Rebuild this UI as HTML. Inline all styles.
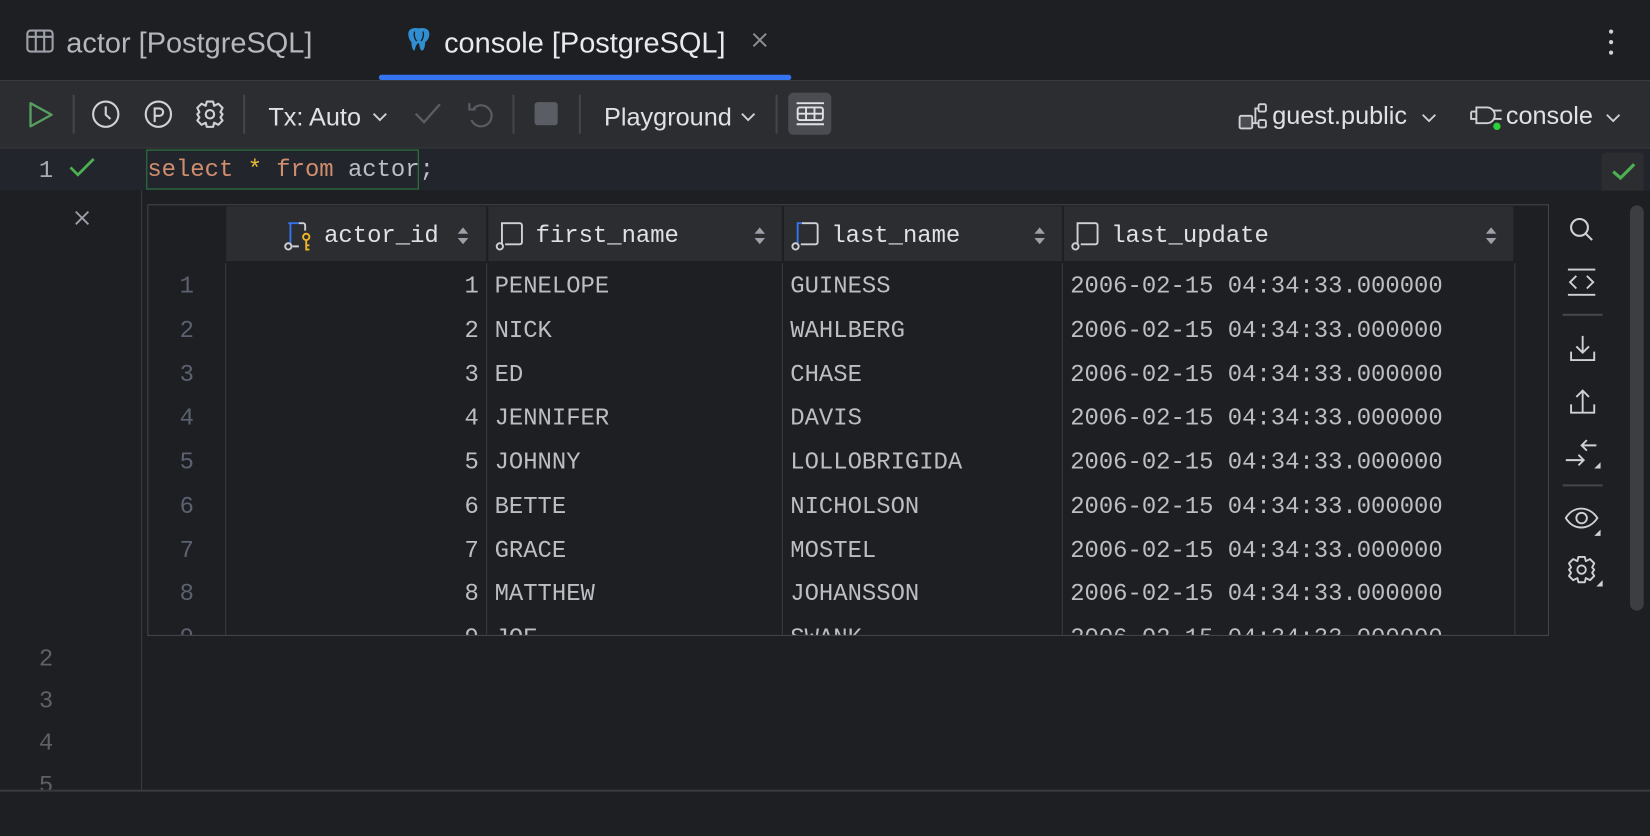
<!DOCTYPE html>
<html><head><meta charset="utf-8"><style>
*{margin:0;padding:0;box-sizing:border-box}
html,body{width:1650px;height:836px;overflow:hidden;background:#1e1f22}
#w{position:absolute;left:0;top:0;width:1568px;height:794px;transform-origin:0 0;transform:scale(1.05230,1.05290);background:#1e1f22;font-family:"Liberation Sans",sans-serif;color:#dfe1e5}
.a{position:absolute}
.ui{font-size:25px;white-space:nowrap}
.mono{font-family:"Liberation Mono",monospace;font-size:22.7px;white-space:pre}
.sep{position:absolute;width:2px;top:90px;height:37px;background:#43454a}
svg{position:absolute;overflow:visible}
</style></head><body><div id="w">
<!-- tab bar -->
<div class="a" style="left:0;top:76px;width:1568px;height:1px;background:#393b40"></div>
<svg style="left:25px;top:28px" width="26" height="22" viewBox="0 0 26 22" fill="none" stroke="#9da0a8" stroke-width="2"><rect x="1" y="1" width="24" height="20" rx="3"/><line x1="1" y1="7" x2="25" y2="7"/><line x1="9" y1="1" x2="9" y2="21"/><line x1="17" y1="1" x2="17" y2="21"/></svg>
<div class="a ui" style="left:63px;top:25px;color:#b4b7be;font-size:27.5px">actor [PostgreSQL]</div>
<svg style="left:385px;top:26px" width="26" height="24" viewBox="0 0 26 24"><path d="M3 6C3 1 9 0 13 1 17 0 23 1 23 6 23 10 21 13 19 14 19 18 18 22 16 22 14 22 14 18 13 15 11 15 10 18 9 22 7 22 6 18 6 14 4 12 3 9 3 6Z" fill="#2f8fd2"/><path d="M9 4C8 7 9 11 11 13M17 4C18 7 17 11 15 13" stroke="#1e1f22" stroke-width="1.3" fill="none"/></svg>
<div class="a ui" style="left:422px;top:25px;color:#e8eaee;font-size:27.5px">console [PostgreSQL]</div>
<svg style="left:715px;top:31px" width="14" height="14" viewBox="0 0 14 14" stroke="#8c8f96" stroke-width="1.8"><path d="M1 1L13 13M13 1L1 13"/></svg>
<div class="a" style="left:360px;top:71px;width:392px;height:5px;border-radius:3px;background:#3574f0"></div>
<div class="a" style="left:1529px;top:28px;width:4px;height:4px;border-radius:2px;background:#cfd1d6;box-shadow:0 10px 0 #cfd1d6,0 20px 0 #cfd1d6"></div>
<!-- toolbar -->
<div class="a" style="left:0;top:77px;width:1568px;height:63px;background:#2b2d30"></div>
<div class="a" style="left:0;top:140px;width:1568px;height:1px;background:#393b40"></div>
<svg style="left:27px;top:96px" width="24" height="26" viewBox="0 0 24 26"><path d="M2 2L22 13 2 24Z" fill="none" stroke="#57a05f" stroke-width="2.2" stroke-linejoin="round"/></svg>
<div class="sep" style="left:69px"></div>
<svg style="left:87px;top:95px" width="27" height="27" viewBox="0 0 27 27" fill="none" stroke="#cfd1d6" stroke-width="2"><circle cx="13.5" cy="13.5" r="12"/><path d="M13.5 6V14L18 18"/></svg>
<svg style="left:137px;top:95px" width="27" height="27" viewBox="0 0 27 27" fill="none" stroke="#cfd1d6" stroke-width="2"><circle cx="13.5" cy="13.5" r="12"/><path d="M10 21V8H14.5A3.5 3.5 0 0 1 14.5 15H10"/></svg>
<svg style="left:186px;top:95px" width="27" height="27" viewBox="-13.5 -13.5 27 27" fill="none" stroke="#cfd1d6" stroke-width="2"><path d="M-3-12H3L4-8 8-10 12-6 10-2 12 0 10 3 12 6 8 10 4 8 3 12H-3L-4 8-8 10-12 6-10 3-12 0-10-2-12-6-8-10-4-8Z" stroke-linejoin="round"/><circle r="4"/></svg>
<div class="sep" style="left:231px"></div>
<div class="a ui" style="left:255px;top:98px;font-size:24px">Tx: Auto</div>
<svg style="left:354px;top:107px" width="14" height="8" viewBox="0 0 14 8" fill="none" stroke="#cfd1d6" stroke-width="1.8"><path d="M1 1L7 7 13 1"/></svg>
<svg style="left:394px;top:98px" width="25" height="20" viewBox="0 0 25 20" fill="none" stroke="#5a5d63" stroke-width="2.2"><path d="M1 10L9 18 24 1"/></svg>
<svg style="left:444px;top:96px" width="25" height="26" viewBox="0 0 25 26" fill="none" stroke="#5a5d63" stroke-width="2"><path d="M6 7A10 10 0 1 1 4 18M2 2V8H8"/></svg>
<div class="sep" style="left:487px"></div>
<div class="a" style="left:508px;top:97px;width:22px;height:22px;border-radius:3px;background:#5a5d63"></div>
<div class="sep" style="left:550px"></div>
<div class="a ui" style="left:574px;top:98px;font-size:24px">Playground</div>
<svg style="left:704px;top:107px" width="14" height="8" viewBox="0 0 14 8" fill="none" stroke="#cfd1d6" stroke-width="1.8"><path d="M1 1L7 7 13 1"/></svg>
<div class="sep" style="left:737px"></div>
<div class="a" style="left:749px;top:88px;width:41px;height:40px;border-radius:5px;background:#4a4c51"></div>
<svg style="left:756px;top:97px" width="28" height="22" viewBox="0 0 28 22" fill="none" stroke="#dfe1e5" stroke-width="1.8"><line x1="1" y1="1" x2="27" y2="1"/><line x1="1" y1="21" x2="27" y2="21"/><rect x="2" y="5" width="24" height="12" rx="2"/><line x1="2" y1="11" x2="26" y2="11"/><line x1="10" y1="5" x2="10" y2="17"/><line x1="18" y1="5" x2="18" y2="17"/></svg>
<svg style="left:1177px;top:98px" width="28" height="26" viewBox="0 0 28 26" fill="none" stroke="#cfd1d6" stroke-width="1.8"><rect x="1" y="12" width="12" height="12" rx="1.5" fill="#4a4c51"/><rect x="19" y="1" width="7" height="7" rx="1.5"/><rect x="19" y="16" width="7" height="7" rx="1.5"/><path d="M13 19H19M16 19V5H19"/></svg>
<div class="a ui" style="left:1209px;top:97px;font-size:24px">guest.public</div>
<svg style="left:1351px;top:108px" width="14" height="8" viewBox="0 0 14 8" fill="none" stroke="#cfd1d6" stroke-width="1.8"><path d="M1 1L7 7 13 1"/></svg>
<svg style="left:1397px;top:99px" width="32" height="26" viewBox="0 0 32 26" fill="none" stroke="#cfd1d6" stroke-width="1.8"><path d="M1 7H6M1 7V14H6"/><path d="M6 3H16A7 7 0 0 1 16 18H6Z"/><path d="M22 6H30M22 14H30"/><circle cx="25.5" cy="21" r="3.5" fill="#2bd13a" stroke="none"/></svg>
<div class="a ui" style="left:1431px;top:97px;font-size:24px">console</div>
<svg style="left:1526px;top:108px" width="14" height="8" viewBox="0 0 14 8" fill="none" stroke="#cfd1d6" stroke-width="1.8"><path d="M1 1L7 7 13 1"/></svg>
<!-- editor -->
<div class="a" style="left:0;top:141px;width:1568px;height:40px;background:#23252d"></div>
<div class="a" style="left:1522px;top:145px;width:40px;height:36px;background:#2b2d30;border-radius:4px 4px 0 0"></div>
<svg style="left:1532px;top:155px" width="22" height="16" viewBox="0 0 22 16" fill="none" stroke="#4caf50" stroke-width="3"><path d="M1 8L8 14 21 1"/></svg>
<div class="a" style="left:134px;top:181px;width:1px;height:569px;background:#393b40"></div>
<div class="a mono" style="left:37px;top:149px;color:#a8abb2">1</div>
<svg style="left:66px;top:150px" width="24" height="18" viewBox="0 0 24 18" fill="none" stroke="#4caf50" stroke-width="2.6"><path d="M1 9L8 16 23 1"/></svg>
<div class="a" style="left:139px;top:142px;width:259px;height:38px;border:1.5px solid #2e7d40"></div>
<div class="a mono" style="left:140px;top:148px;color:#bcbec4"><span style="color:#cf8e6d">select</span> <span style="color:#e8ba36">*</span> <span style="color:#cf8e6d">from</span> actor;</div>
<svg style="left:71px;top:200px" width="14" height="14" viewBox="0 0 14 14" stroke="#9da0a8" stroke-width="1.8"><path d="M1 1L13 13M13 1L1 13"/></svg>
<!-- grid -->
<div class="a" style="left:140px;top:194px;width:1332px;height:410px;border:1.5px solid #43454a;overflow:hidden">
 <div class="a" style="left:74px;top:1px;width:1223px;height:52px;background:#2b2d30"></div>
 <div class="a" style="left:321px;top:1px;width:2px;height:410px;background:#1e1f22"></div>
 <div class="a" style="left:321px;top:55px;width:1px;height:360px;background:#393b40"></div>
 <div class="a" style="left:602px;top:1px;width:2px;height:410px;background:#1e1f22"></div>
 <div class="a" style="left:602px;top:55px;width:1px;height:360px;background:#393b40"></div>
 <div class="a" style="left:868px;top:1px;width:2px;height:410px;background:#1e1f22"></div>
 <div class="a" style="left:868px;top:55px;width:1px;height:360px;background:#393b40"></div>
 <div class="a" style="left:73px;top:55px;width:1px;height:360px;background:#393b40"></div>
 <div class="a" style="left:1298px;top:55px;width:1px;height:360px;background:#393b40"></div>
 <svg style="left:129px;top:15px" width="32" height="28" viewBox="0 0 32 28" fill="none" stroke-width="1.8"><path d="M6 22V2H4M6 2H14" stroke="#3574f0"/><path d="M14 2H18A2 2 0 0 1 20 4V9" stroke="#cfd1d6"/><circle cx="4" cy="24" r="3" stroke="#cfd1d6"/><path d="M8 24H14" stroke="#cfd1d6"/><circle cx="21" cy="15" r="3" stroke="#f0b429"/><path d="M21 18V27H24M21 23H24" stroke="#f0b429"/></svg>
 <div class="a mono" style="left:167px;top:16px;color:#dfe1e5">actor_id</div>
 <svg style="left:293px;top:20px" width="12" height="18" viewBox="0 0 12 18" fill="#9da0a8"><path d="M6 1L11 7H1Z"/><path d="M6 17L11 11H1Z"/></svg>
 <svg style="left:330px;top:15px" width="32" height="28" viewBox="0 0 32 28" fill="none" stroke="#cfd1d6" stroke-width="1.8"><path d="M6 22V2H23A2 2 0 0 1 25 4V20A2 2 0 0 1 23 22H9"/><circle cx="4" cy="24" r="3"/></svg>
 <div class="a mono" style="left:368px;top:16px;color:#dfe1e5">first_name</div>
 <svg style="left:575px;top:20px" width="12" height="18" viewBox="0 0 12 18" fill="#9da0a8"><path d="M6 1L11 7H1Z"/><path d="M6 17L11 11H1Z"/></svg>
 <svg style="left:611px;top:15px" width="32" height="28" viewBox="0 0 32 28" fill="none" stroke-width="1.8"><path d="M6 22V2H10" stroke="#3574f0"/><path d="M10 2H23A2 2 0 0 1 25 4V20A2 2 0 0 1 23 22H9" stroke="#cfd1d6"/><circle cx="4" cy="24" r="3" stroke="#cfd1d6"/></svg>
 <div class="a mono" style="left:649px;top:16px;color:#dfe1e5">last_name</div>
 <svg style="left:841px;top:20px" width="12" height="18" viewBox="0 0 12 18" fill="#9da0a8"><path d="M6 1L11 7H1Z"/><path d="M6 17L11 11H1Z"/></svg>
 <svg style="left:877px;top:15px" width="32" height="28" viewBox="0 0 32 28" fill="none" stroke="#cfd1d6" stroke-width="1.8"><path d="M6 22V2H23A2 2 0 0 1 25 4V20A2 2 0 0 1 23 22H9"/><circle cx="4" cy="24" r="3"/></svg>
 <div class="a mono" style="left:915px;top:16px;color:#dfe1e5">last_update</div>
 <svg style="left:1270px;top:20px" width="12" height="18" viewBox="0 0 12 18" fill="#9da0a8"><path d="M6 1L11 7H1Z"/><path d="M6 17L11 11H1Z"/></svg>
</div>
<div id="rows" class="a" style="left:0;top:0;width:1568px;height:603px;overflow:hidden;color:#bcbec4"></div>
<!-- right bar -->
<svg style="left:1491px;top:206px" width="24" height="24" viewBox="0 0 24 24" fill="none" stroke="#cfd1d6" stroke-width="2"><circle cx="10" cy="10" r="8"/><path d="M16 16L22 22"/></svg>
<svg style="left:1489px;top:255px" width="28" height="26" viewBox="0 0 28 26" fill="none" stroke="#cfd1d6" stroke-width="1.8"><path d="M1 1H27M1 25H27M9 7L3 13 9 19M19 7L25 13 19 19"/></svg>
<div class="a" style="left:1485px;top:298px;width:38px;height:2px;background:#43454a"></div>
<svg style="left:1491px;top:318px" width="26" height="26" viewBox="0 0 26 26" fill="none" stroke="#cfd1d6" stroke-width="1.8"><path d="M13 1V17M7 11L13 17 19 11M2 16V24H24V16"/></svg>
<svg style="left:1491px;top:368px" width="26" height="26" viewBox="0 0 26 26" fill="none" stroke="#cfd1d6" stroke-width="1.8"><path d="M13 24V3M7 9L13 3 19 9M2 16V24H24V16"/></svg>
<svg style="left:1487px;top:415px" width="36" height="32" viewBox="0 0 36 32" fill="none" stroke="#cfd1d6" stroke-width="1.8"><path d="M30 8H16M21 3L16 8 21 13M1 22H18M13 17L18 22 13 27"/><path d="M34 24V30H28Z" fill="#cfd1d6" stroke="none"/></svg>
<div class="a" style="left:1485px;top:460px;width:38px;height:2px;background:#43454a"></div>
<svg style="left:1487px;top:479px" width="36" height="32" viewBox="0 0 36 32" fill="none" stroke="#cfd1d6" stroke-width="1.8"><path d="M1 13C8 1 23 1 31 13 23 25 8 25 1 13Z"/><circle cx="16" cy="13" r="5"/><path d="M34 24V30H28Z" fill="#cfd1d6" stroke="none"/></svg>
<svg style="left:1489px;top:527px" width="36" height="32" viewBox="-14 -14 36 32" fill="none" stroke="#cfd1d6" stroke-width="1.8"><path d="M-3-12H3L4-8 8-10 12-6 10-2 12 0 10 3 12 6 8 10 4 8 3 12H-3L-4 8-8 10-12 6-10 3-12 0-10-2-12-6-8-10-4-8Z" stroke-linejoin="round"/><circle r="4"/><path d="M20 10V16H14Z" fill="#cfd1d6" stroke="none"/></svg>
<div class="a" style="left:1549px;top:195px;width:13px;height:385px;border-radius:7px;background:#3c3e42"></div>
<!-- lower gutter -->
<div class="a mono" style="left:37px;top:613px;color:#5f6167">2</div>
<div class="a mono" style="left:37px;top:653px;color:#5f6167">3</div>
<div class="a mono" style="left:37px;top:693px;color:#5f6167">4</div>
<div class="a" style="left:0;top:730px;width:134px;height:20px;overflow:hidden"><div class="a mono" style="left:37px;top:3px;color:#5f6167">5</div></div>
<div class="a" style="left:0;top:750px;width:1568px;height:2px;background:#393b40"></div>
<div class="a" style="left:0;top:752px;width:1568px;height:42px;background:#1e1f22"></div>
</div>
<script>
var d=[["PENELOPE","GUINESS"],["NICK","WAHLBERG"],["ED","CHASE"],["JENNIFER","DAVIS"],["JOHNNY","LOLLOBRIGIDA"],["BETTE","NICHOLSON"],["GRACE","MOSTEL"],["MATTHEW","JOHANSSON"],["JOE","SWANK"]];
var h="";
for(var i=0;i<d.length;i++){var y=259+i*41.75;
h+='<div class="a mono" style="left:141px;top:'+y+'px;width:73px;text-align:center;color:#5b6170">'+(i+1)+'</div>'+
'<div class="a mono" style="left:215px;top:'+y+'px;width:240px;text-align:right">'+(i+1)+'</div>'+
'<div class="a mono" style="left:470px;top:'+y+'px">'+d[i][0]+'</div>'+
'<div class="a mono" style="left:751px;top:'+y+'px">'+d[i][1]+'</div>'+
'<div class="a mono" style="left:1017px;top:'+y+'px">2006-02-15 04:34:33.000000</div>';}
document.getElementById('rows').innerHTML=h;
</script>
</body></html>
